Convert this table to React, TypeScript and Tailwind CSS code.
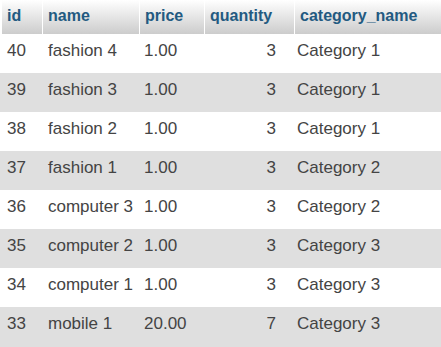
import React from "react";

const rows = [
  ["40", "fashion 4", "1.00", "3", "Category 1"],
  ["39", "fashion 3", "1.00", "3", "Category 1"],
  ["38", "fashion 2", "1.00", "3", "Category 1"],
  ["37", "fashion 1", "1.00", "3", "Category 2"],
  ["36", "computer 3", "1.00", "3", "Category 2"],
  ["35", "computer 2", "1.00", "3", "Category 3"],
  ["34", "computer 1", "1.00", "3", "Category 3"],
  ["33", "mobile 1", "20.00", "7", "Category 3"],
];

export default function App() {
  return (
    <div className="w-[441px] h-[347px] overflow-hidden bg-white" style={{ fontFamily: '"Liberation Sans", Arial, sans-serif' }}>
      <div className="grid grid-cols-[40px_96px_64px_89px_150px] gap-x-[1px] pl-[2px]">
        {["id", "name", "price", "quantity", "category_name"].map((h) => (
          <div
            key={h}
            className="h-[34px] pl-[5px] pt-[6px] text-[16px] font-bold text-[#235a81] bg-gradient-to-b from-white to-[#cccccc] leading-[20px]"
          >
            {h}
          </div>
        ))}
      </div>
      <div>
        {rows.map((r, i) => (
          <div
            key={r[0]}
            className={`grid grid-cols-[42px_96px_64px_89px_150px] ${i === rows.length - 1 ? "h-[40px]" : "h-[39px]"} text-[17px] text-[#444] leading-[20px] pt-[7px] ${i % 2 === 1 ? "bg-[#dfdfdf]" : "bg-white"}`}
          >
            <div className="pl-[7px]">{r[0]}</div>
            <div className="pl-[6px]">{r[1]}</div>
            <div className="pl-[6px]">{r[2]}</div>
            <div className="pr-[15px] text-right">{r[3]}</div>
            <div className="pl-[6px]">{r[4]}</div>
          </div>
        ))}
      </div>
    </div>
  );
}
